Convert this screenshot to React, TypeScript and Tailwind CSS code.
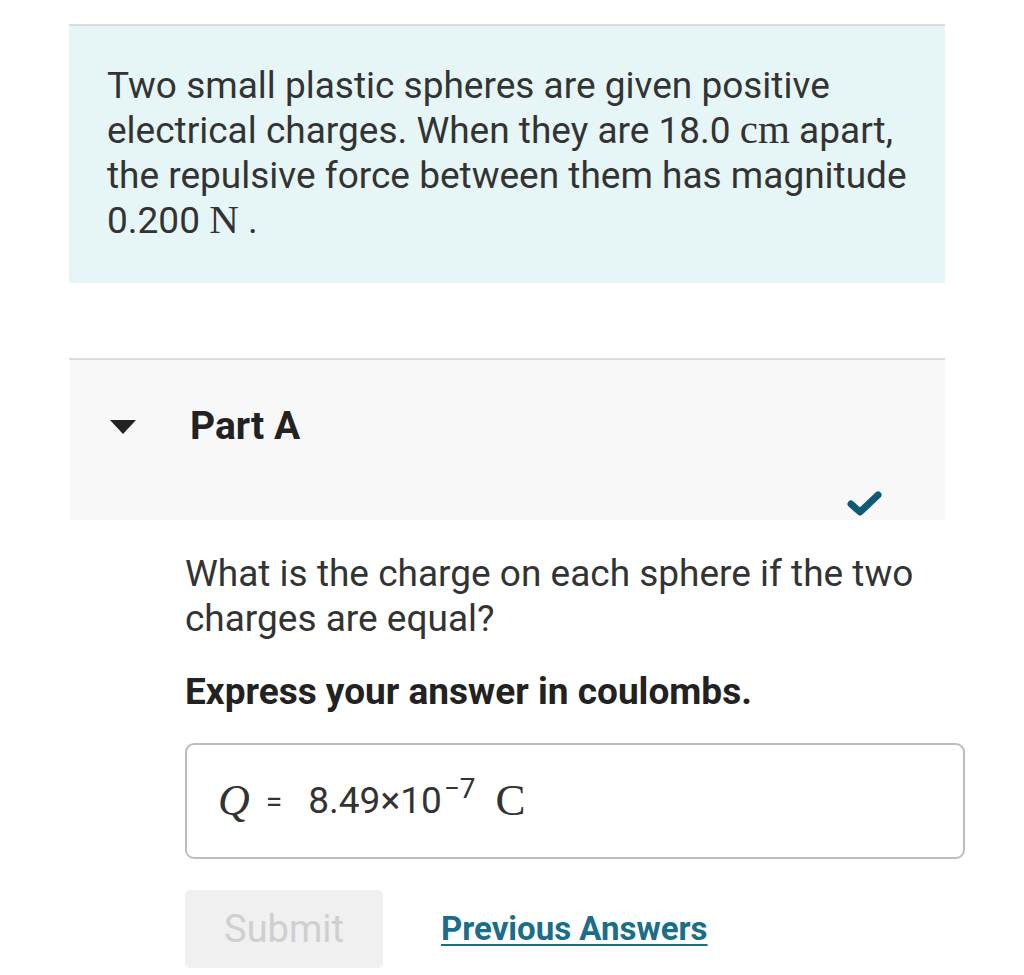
export default function App() {
  return (
    <div className="min-h-screen bg-white text-[#333] pt-[24px]" style={{ fontFamily: 'Roboto, "Noto Sans", sans-serif' }}>
      <div className="ml-[69px] w-[876px]">
        <div className="border-t-2 border-[#dcdcdc] bg-[#e6f6f7] pl-[38px] pr-[30px] pt-[37px] pb-[40px] text-[37px] leading-[45px]">
          Two small plastic spheres are given positive electrical charges. When they are 18.0{' '}
          <span className="text-[41px] leading-none" style={{ fontFamily: '"Liberation Serif", serif' }}>cm</span> apart, the repulsive force between them has magnitude 0.200{' '}
          <span className="text-[41px] leading-none" style={{ fontFamily: '"Liberation Serif", serif' }}>N</span> .
        </div>

        <div className="mt-[75px] border-t-2 border-[#dcdcdc] bg-[#f8f8f8] h-[162px] relative">
          <div className="flex items-center h-[45px] mt-[44px]">
            <svg width="26" height="14" viewBox="0 0 26 14" className="ml-[41px]">
              <polygon points="0,0 26,0 13,14" fill="#222" />
            </svg>
            <span className="ml-[54px] text-[39px] font-bold text-[#222]">Part A</span>
          </div>
          <svg width="36" height="28" viewBox="0 0 36 28" className="absolute left-[778px] top-[130px]">
            <path d="M4 14 L13 22 L31 5" stroke="#0e5a74" strokeWidth="7" strokeLinecap="round" strokeLinejoin="round" fill="none" />
          </svg>
        </div>
      </div>

      <div className="ml-[185px] mr-[59px]">
        <p className="mt-[31px] text-[37px] leading-[45px] pr-[40px]">
          What is the charge on each sphere if the two charges are equal?
        </p>
        <p className="mt-[28px] text-[37px] leading-[45px] font-bold text-[#222]">Express your answer in coulombs.</p>

        <div className="mt-[29px] h-[116px] border-2 border-[#bdbdbd] rounded-[9px] flex items-center pl-[31px] text-[37px]">
          <span className="italic text-[44px]" style={{ fontFamily: '"Liberation Serif", serif' }}>Q</span>
          <span className="ml-[16px] text-[30px]">=</span>
          <span className="ml-[26px]">
            8.49×10<sup className="text-[28px] relative -top-[15px] ml-[2px]">−7</sup>
          </span>
          <span className="ml-[20px] text-[45px]" style={{ fontFamily: '"Liberation Serif", serif' }}>C</span>
        </div>

        <div className="mt-[31px] flex items-center">
          <button className="w-[198px] h-[78px] bg-[#f0f0f0] rounded-[5px] text-[38px] text-[#cfcfcf]">Submit</button>
          <a className="ml-[58px] text-[33px] font-bold text-[#1a6e8a] underline underline-offset-[4px] decoration-2">Previous Answers</a>
        </div>
      </div>
    </div>
  )
}
